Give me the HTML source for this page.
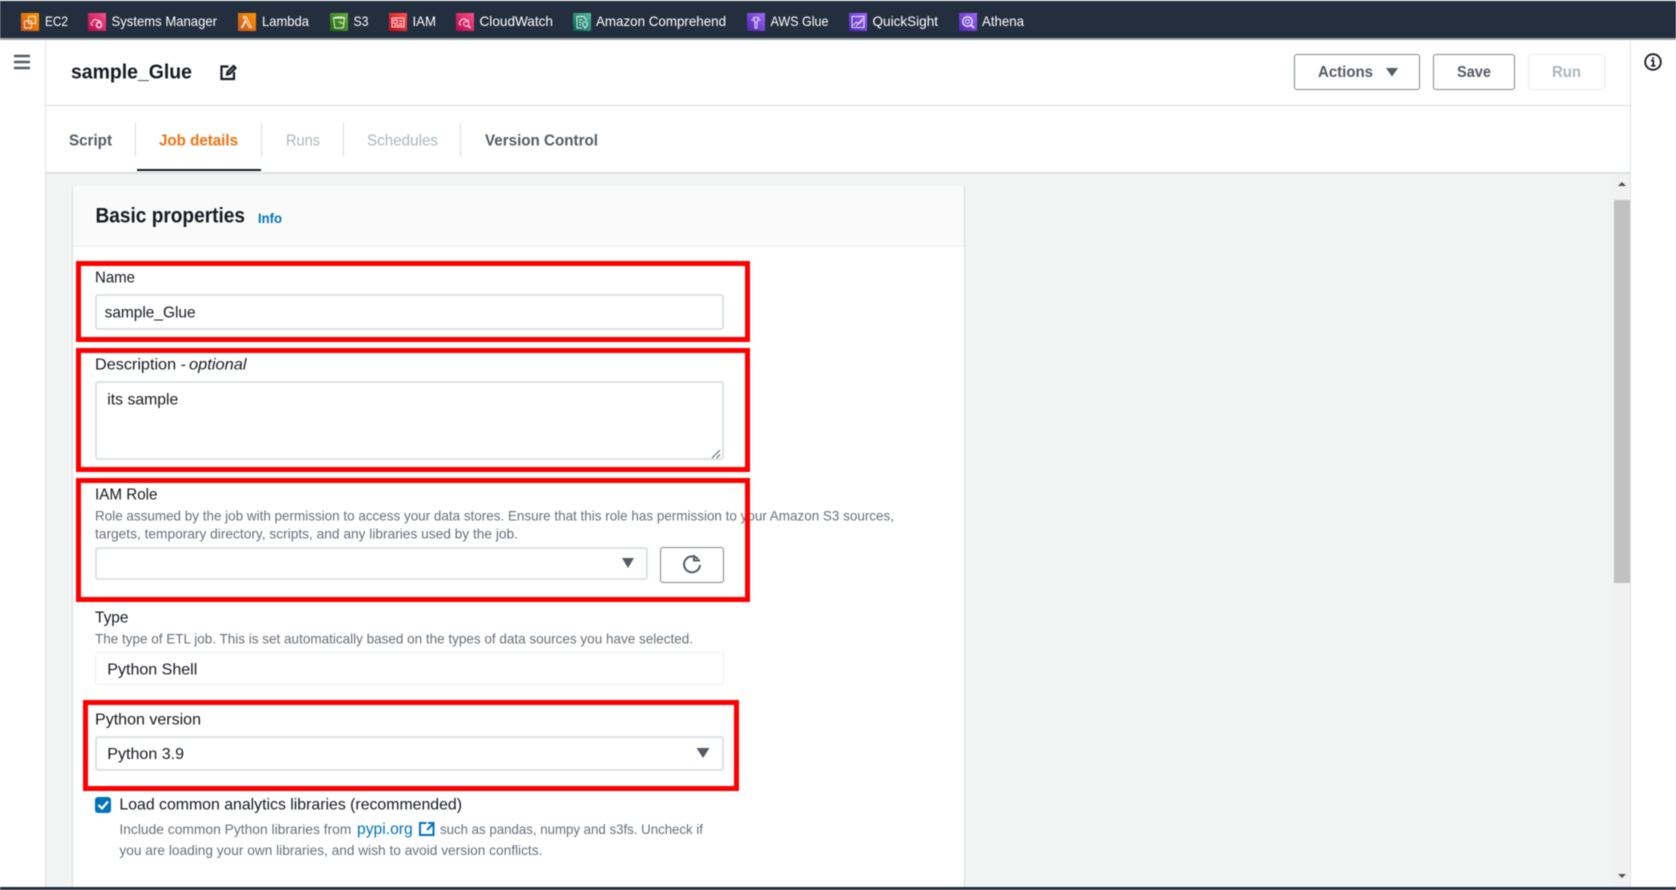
<!DOCTYPE html>
<html lang="en"><head><meta charset="utf-8"><title>sample_Glue</title>
<style>
html,body{margin:0;padding:0;width:1676px;height:890px;overflow:hidden;background:#fff;font-family:"Liberation Sans",sans-serif}
#p{position:relative;width:1676px;height:890px;overflow:hidden;filter:blur(.4px)}
.b{position:absolute;box-sizing:border-box}
.in{border:2px solid #dde2e3;border-radius:3px;background:#fff}
.red{border:5px solid #f00;background:transparent}
svg.o{position:absolute;left:0;top:0}
text{font-family:"Liberation Sans",sans-serif}
.t{font-size:14px;fill:#fff}
.l{font-size:16px;fill:#16191f}
.h{font-size:14px;fill:#687078}
.tab{font-size:16px;font-weight:700}
</style></head><body><div id="p">
<div class="b" style="left:0;top:0;width:1676px;height:38px;background:#232f3e;border-top:1px solid #dfe3e6"></div>
<div class="b" style="left:0;top:38px;width:1676px;height:2px;background:#9aa0a7"></div>
<div class="b" style="left:45px;top:41px;width:1px;height:846px;background:#dfe3e3"></div>
<div class="b" style="left:1630px;top:41px;width:1px;height:846px;background:#dfe3e3"></div>
<div class="b" style="left:46px;top:105px;width:1585px;height:1px;background:#d9dedf"></div>
<div class="b" style="left:46px;top:174px;width:1584px;height:713px;background:#f2f3f3"></div>
<div class="b" style="left:46px;top:172px;width:1585px;height:2px;background:#dfe3e3"></div>
<div class="b" style="left:137px;top:169px;width:124px;height:2px;background:#16191f"></div>
<div class="b" style="left:135px;top:123px;width:1px;height:33px;background:#d5dbdb"></div>
<div class="b" style="left:261px;top:123px;width:1px;height:33px;background:#d5dbdb"></div>
<div class="b" style="left:343px;top:123px;width:1px;height:33px;background:#d5dbdb"></div>
<div class="b" style="left:460px;top:123px;width:1px;height:33px;background:#d5dbdb"></div>
<div class="b" style="left:1294px;top:54px;width:126px;height:36px;border:1.5px solid #7d878f;border-radius:3px"></div>
<div class="b" style="left:1433px;top:54px;width:82px;height:36px;border:1.5px solid #7d878f;border-radius:3px"></div>
<div class="b" style="left:1528px;top:54px;width:77px;height:36px;border:1.5px solid #eaeded;border-radius:3px"></div>
<div class="b" style="left:1614px;top:174px;width:16px;height:713px;background:#f1f1f1"></div>
<div class="b" style="left:1614px;top:200px;width:16px;height:383px;background:#c1c1c1"></div>
<div class="b" style="left:72px;top:186px;width:893px;height:701px;background:#fff;border-left:1px solid #d9dedf;border-right:1px solid #d9dedf"></div>
<div class="b" style="left:73px;top:186px;width:891px;height:61px;background:#fafafa;border-bottom:1px solid #f0f2f2"></div>
<div class="b in" style="left:95px;top:294px;width:629px;height:36px"></div>
<div class="b in" style="left:95px;top:381px;width:629px;height:79px"></div>
<div class="b in" style="left:95px;top:547px;width:553px;height:33px"></div>
<div class="b" style="left:660px;top:547px;width:64px;height:36px;border:1.5px solid #7d878f;border-radius:3px"></div>
<div class="b" style="left:95px;top:652px;width:629px;height:33px;border:1px solid #eef0f0;border-radius:3px"></div>
<div class="b in" style="left:95px;top:736px;width:629px;height:35px"></div>
<div class="b" style="left:95px;top:797px;width:16px;height:16px;background:#0073bb;border-radius:3px"></div>
<div class="b" style="left:0;top:887px;width:1676px;height:3px;background:#232f3e"></div>

<svg class="o" width="1676" height="890" viewBox="0 0 1676 890" xmlns="http://www.w3.org/2000/svg">
<defs>
<linearGradient id="go" x1="0" y1="1" x2="1" y2="0"><stop offset="0" stop-color="#c8511b"/><stop offset="1" stop-color="#f90"/></linearGradient>
<linearGradient id="gp" x1="0" y1="1" x2="1" y2="0"><stop offset="0" stop-color="#b0084d"/><stop offset="1" stop-color="#ff4f8b"/></linearGradient>
<linearGradient id="gg" x1="0" y1="1" x2="1" y2="0"><stop offset="0" stop-color="#1b660f"/><stop offset="1" stop-color="#6cae3e"/></linearGradient>
<linearGradient id="gr" x1="0" y1="1" x2="1" y2="0"><stop offset="0" stop-color="#bd0816"/><stop offset="1" stop-color="#ff5252"/></linearGradient>
<linearGradient id="gt" x1="0" y1="1" x2="1" y2="0"><stop offset="0" stop-color="#055f4e"/><stop offset="1" stop-color="#56c0a7"/></linearGradient>
<linearGradient id="gv" x1="0" y1="1" x2="1" y2="0"><stop offset="0" stop-color="#4d27a8"/><stop offset="1" stop-color="#a166ff"/></linearGradient>
</defs>

<!-- service icons -->
<g fill="none" stroke="#fff" stroke-width="1" stroke-opacity=".85">
<g transform="translate(21,13)"><rect width="18" height="18" fill="url(#go)" stroke="none"/><rect x="7.500" y="3.500" width="7" height="7" rx=".5"/><rect x="3.500" y="8" width="7" height="7" rx=".5"/></g>
<g transform="translate(88,13)"><rect width="18" height="18" fill="url(#gp)" stroke="none"/><path d="M5 12.500c-2.200 0-2.400-3.200-.3-3.500.2-2.500 3.700-3.500 5-1.200 1.700-.5 3 .7 2.800 2.200"/><circle cx="11" cy="12" r="2.600" stroke-width="1.500"/></g>
<g transform="translate(238,13)"><rect width="18" height="18" fill="url(#go)" stroke="none"/><path d="M5.500 3.500h2.500l5.500 11h-2.200L8 8l-3.500 6.500H3.500l4-7.800-1-1.700h-1z"/></g>
<g transform="translate(330,13)"><rect width="18" height="18" fill="url(#gg)" stroke="none"/><path d="M3.500 5h11l-1.300 10H4.800z"/><path d="M3.500 5c2-1.300 9-1.300 11 0M8.500 9l5 1.500"/></g>
<g transform="translate(389,13)"><rect width="18" height="18" fill="url(#gr)" stroke="none"/><rect x="3" y="5" width="12" height="9"/><rect x="4.800" y="7" width="3.400" height="3.400"/><path d="M10 8h3.500M10 10.500h3.500M5 12.300h8.500"/></g>
<g transform="translate(456,13)"><rect width="18" height="18" fill="url(#gp)" stroke="none"/><path d="M5.200 12c-2.400 0-2.700-3.300-.4-3.700.3-2.500 3.800-3.500 5.200-1.200 1.200-.4 2.400.2 2.800 1.200"/><circle cx="10.200" cy="10.800" r="2.500"/><path d="M12 12.600l2.500 2.400" stroke-width="1.500"/></g>
<g transform="translate(573,13)"><rect width="18" height="18" fill="url(#gt)" stroke="none"/><path d="M9 15H4V3.500h6.500L13 6v2"/><path d="M6 7h3M6 9.500h2.500M6 12h2"/><path d="M12 9c-3 .2-3 3.500-1 4.500l1 1.800 1-1.800c2-1 2-4.300-1-4.500z"/></g>
<g transform="translate(747,13)"><rect width="18" height="18" fill="url(#gv)" stroke="none"/><path d="M6.500 4.500h5L10 9.500H8zM8 9.500h2V15H8z"/><path d="M6.500 7.500l-2-1M11.500 7.500l2-1"/></g>
<g transform="translate(849,13)"><rect width="18" height="18" fill="url(#gv)" stroke="none"/><rect x="3" y="3.500" width="12" height="11"/><path d="M4 12.500l3.500-3.500 2 1.500L14 5.500M7 13l3-2.500 3.500-3"/></g>
<g transform="translate(959,13)"><rect width="18" height="18" fill="url(#gv)" stroke="none"/><circle cx="8.500" cy="8.500" r="4.700" stroke-width="1.400"/><circle cx="8.500" cy="8.500" r="2"/><path d="M12 12l3 3" stroke-width="1.600"/></g>
</g>

<!-- topbar text -->
<g>
<text class="t" x="45" y="26" textLength="23" lengthAdjust="spacingAndGlyphs">EC2</text>
<text class="t" x="111.500" y="26" textLength="105.500" lengthAdjust="spacingAndGlyphs">Systems Manager</text>
<text class="t" x="262" y="26" textLength="47" lengthAdjust="spacingAndGlyphs">Lambda</text>
<text class="t" x="353.500" y="26" textLength="15" lengthAdjust="spacingAndGlyphs">S3</text>
<text class="t" x="412.500" y="26" textLength="23.500" lengthAdjust="spacingAndGlyphs">IAM</text>
<text class="t" x="479.500" y="26" textLength="73.500" lengthAdjust="spacingAndGlyphs">CloudWatch</text>
<text class="t" x="596" y="26" textLength="130" lengthAdjust="spacingAndGlyphs">Amazon Comprehend</text>
<text class="t" x="770.500" y="26" textLength="58" lengthAdjust="spacingAndGlyphs">AWS Glue</text>
<text class="t" x="872.500" y="26" textLength="65.500" lengthAdjust="spacingAndGlyphs">QuickSight</text>
<text class="t" x="982" y="26" textLength="42" lengthAdjust="spacingAndGlyphs">Athena</text>
</g>

<!-- hamburger -->
<path d="M14 56h16M14 62h16M14 68h16" stroke="#545b64" stroke-width="2.600" fill="none"/>

<!-- title -->
<text x="71" y="78.500" font-size="20" font-weight="700" fill="#16191f" textLength="121" lengthAdjust="spacingAndGlyphs">sample_Glue</text>
<path d="M228.500 66.500H221.500V79H234V72M227 74.500l.5-2.500 6-6 2 2-6 6z" fill="none" stroke="#16191f" stroke-width="2.200"/>

<!-- actions -->
<text x="1318" y="77" font-size="16" font-weight="700" fill="#545b64" textLength="55" lengthAdjust="spacingAndGlyphs">Actions</text>
<path d="M1386 68h12l-6 8.500z" fill="#545b64"/>
<text x="1457" y="77" font-size="16" font-weight="700" fill="#545b64" textLength="34" lengthAdjust="spacingAndGlyphs">Save</text>
<text x="1552" y="77" font-size="16" font-weight="700" fill="#aab7b8" textLength="29" lengthAdjust="spacingAndGlyphs">Run</text>
<circle cx="1653" cy="62" r="7.800" fill="none" stroke="#16191f" stroke-width="1.800"/>
<path d="M1651 60.500h2.300v5M1651 65.800h4.500M1653 57.200v1.800" fill="none" stroke="#16191f" stroke-width="1.700"/>

<!-- tabs -->
<text class="tab" x="69" y="145.500" fill="#545b64" textLength="43" lengthAdjust="spacingAndGlyphs">Script</text>
<text class="tab" x="159" y="145.500" fill="#ec7211" textLength="79" lengthAdjust="spacingAndGlyphs">Job details</text>
<text x="286" y="145.500" font-size="16" fill="#aab7b8" textLength="34" lengthAdjust="spacingAndGlyphs">Runs</text>
<text x="367" y="145.500" font-size="16" fill="#aab7b8" textLength="71" lengthAdjust="spacingAndGlyphs">Schedules</text>
<text class="tab" x="485" y="145.500" fill="#545b64" textLength="113" lengthAdjust="spacingAndGlyphs">Version Control</text>

<!-- scroll arrows -->
<path d="M1618 186l4-4 4 4z" fill="#505050"/><path d="M1618 874h8l-4 4z" fill="#505050"/>

<!-- card -->
<text x="95.500" y="222.500" font-size="21" font-weight="700" fill="#16191f" textLength="149.500" lengthAdjust="spacingAndGlyphs">Basic properties</text>
<text x="258" y="223" font-size="14" font-weight="700" fill="#0073bb" textLength="24" lengthAdjust="spacingAndGlyphs">Info</text>

<text class="l" x="95" y="282.500" textLength="40" lengthAdjust="spacingAndGlyphs">Name</text>
<text class="l" x="104.600" y="317.500" textLength="91" lengthAdjust="spacingAndGlyphs">sample_Glue</text>
<text class="l" x="95" y="369.500" textLength="91" lengthAdjust="spacingAndGlyphs">Description -</text>
<text class="l" x="189" y="369.500" font-style="italic" textLength="57.500" lengthAdjust="spacingAndGlyphs">optional</text>
<text class="l" x="107.300" y="404.500" textLength="71" lengthAdjust="spacingAndGlyphs">its sample</text>
<path d="M712 458l8-8M716.500 458l3.500-3.500" stroke="#545b64" stroke-width="1" fill="none"/>

<text class="l" x="95" y="499.500" textLength="62.500" lengthAdjust="spacingAndGlyphs">IAM Role</text>
<text class="h" x="95" y="520.500" textLength="799" lengthAdjust="spacingAndGlyphs">Role assumed by the job with permission to access your data stores. Ensure that this role has permission to your Amazon S3 sources,</text>
<text class="h" x="95" y="538.500" textLength="423" lengthAdjust="spacingAndGlyphs">targets, temporary directory, scripts, and any libraries used by the job.</text>
<path d="M622 558h12l-6 10z" fill="#545b64"/>
<path d="M698 559a8 8 0 1 0 2 6M694 555v5.500h6" fill="none" stroke="#545b64" stroke-width="2"/>

<text class="l" x="95" y="622.500" textLength="33.500" lengthAdjust="spacingAndGlyphs">Type</text>
<text class="h" x="95" y="643.500" textLength="598" lengthAdjust="spacingAndGlyphs">The type of ETL job. This is set automatically based on the types of data sources you have selected.</text>
<text class="l" x="107.300" y="674.500" textLength="90" lengthAdjust="spacingAndGlyphs">Python Shell</text>

<text class="l" x="95" y="724.500" textLength="106" lengthAdjust="spacingAndGlyphs">Python version</text>
<text class="l" x="107.300" y="759" textLength="76.700" lengthAdjust="spacingAndGlyphs">Python 3.9</text>
<path d="M696.500 748h13l-6.500 10z" fill="#545b64"/>

<path d="M98.500 805l3.500 3.500 6-7" fill="none" stroke="#fff" stroke-width="2.200"/>
<text class="l" x="119.400" y="809.500" textLength="342.600" lengthAdjust="spacingAndGlyphs">Load common analytics libraries (recommended)</text>
<text class="h" x="119.400" y="834" textLength="232" lengthAdjust="spacingAndGlyphs">Include common Python libraries from</text>
<text x="357" y="834" font-size="16" fill="#0073bb" textLength="55.700" lengthAdjust="spacingAndGlyphs">pypi.org</text>
<path d="M426.500 823h-6.500v12h13.500v-6.500M427 830l6-6M428 823h5.500v5.500" fill="none" stroke="#0073bb" stroke-width="2"/>
<text class="h" x="440" y="834" textLength="263" lengthAdjust="spacingAndGlyphs">such as pandas, numpy and s3fs. Uncheck if</text>
<text class="h" x="119.400" y="855" textLength="423" lengthAdjust="spacingAndGlyphs">you are loading your own libraries, and wish to avoid version conflicts.</text>
</svg>

<div class="b red" style="left:75.500px;top:261px;width:674px;height:81px"></div>
<div class="b red" style="left:75.500px;top:348px;width:674px;height:124px"></div>
<div class="b red" style="left:75.500px;top:478px;width:674px;height:124px"></div>
<div class="b red" style="left:83px;top:700px;width:656px;height:91px"></div>
</div></body></html>
